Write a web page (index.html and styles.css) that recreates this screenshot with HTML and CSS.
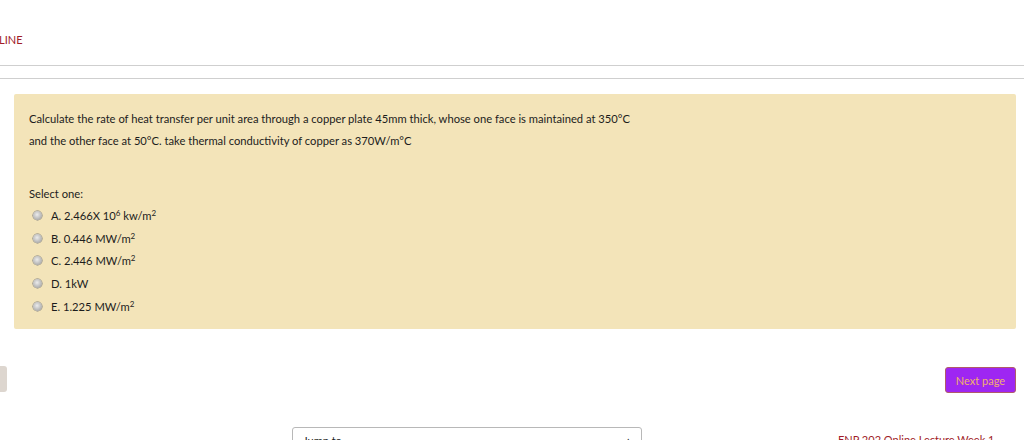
FILE: index.html
```html
<!DOCTYPE html>
<html>
<head>
<meta charset="utf-8">
<link rel="stylesheet" href="styles.css">
</head>
<body>
<div class="top">
  <div class="brand">LINE</div>
</div>
<div class="rule rule1"></div>
<div class="rule rule2"></div>
<div class="quiz">
  <div class="question">
    <p>Calculate the rate of heat transfer per unit area through a copper plate 45mm thick, whose one face is maintained at 350°C</p>
    <p>and the other face at 50°C. take thermal conductivity of copper as 370W/m°C</p>
  </div>
  <div class="answers">
    <div class="prompt">Select one:</div>
    <label class="opt"><span class="radio"></span><span class="otext">A. 2.466X 10<sup>6</sup> kw/m<sup>2</sup></span></label>
    <label class="opt"><span class="radio"></span><span class="otext">B. 0.446 MW/m<sup>2</sup></span></label>
    <label class="opt"><span class="radio"></span><span class="otext">C. 2.446 MW/m<sup>2</sup></span></label>
    <label class="opt"><span class="radio"></span><span class="otext">D. 1kW</span></label>
    <label class="opt"><span class="radio"></span><span class="otext">E. 1.225 MW/m<sup>2</sup></span></label>
  </div>
</div>
<div class="nav">
  <div class="prev"></div>
  <button class="next">Next page</button>
</div>
<div class="bottom">
  <div class="jump"><span class="jtext">Jump to...</span><span class="caret">▴</span></div>
  <div class="nextlink">ENP 202 Online Lecture Week 1</div>
</div>
</body>
</html>
```
FILE: styles.css
```css
html, body {
  margin: 0;
  padding: 0;
  background: #ffffff;
  overflow: hidden;
  height: 440px;
  font-family: "Lato", "Liberation Sans", sans-serif;
}
.top {
  height: 65px;
  position: relative;
}
.brand {
  position: absolute;
  left: -1px;
  top: 33px;
  color: #a01c28;
  font-size: 11px;
}
.rule {
  height: 1px;
  background: #cfcfcf;
}
.rule1 { margin-bottom: 12px; }
.rule2 { margin-bottom: 15px; }
.quiz {
  margin: 0 8px 0 14px;
  background: #f3e4b9;
  border-radius: 2px;
  padding: 14px 15px 16px 15px;
  height: 235px;
  box-sizing: border-box;
  color: #1c1c1c;
  font-size: 11.2px;
}
.question p {
  margin: 0;
  line-height: 22px;
}
.answers {
  margin-top: 32px;
}
.prompt {
  line-height: 20px;
}
.opt {
  display: flex;
  align-items: center;
  height: 22.7px;
  padding-left: 4px;
}
.otext sup {
  font-size: 8px;
  line-height: 0;
  vertical-align: 4px;
}
.radio {
  width: 9px;
  height: 9px;
  border-radius: 50%;
  margin-right: 9px;
  background: radial-gradient(circle at 45% 40%, #ececec 0%, #b8b8b8 60%, #8a8a8a 100%);
  box-shadow: 0 0 0 0.5px #7a7a7a;
}
.nav {
  display: flex;
  justify-content: space-between;
  align-items: flex-start;
  margin-top: 37px;
  padding-right: 8px;
}
.prev {
  width: 7px;
  height: 26px;
  background: #ddd6cf;
  border-radius: 0 3px 3px 0;
}
.next {
  width: 71px;
  height: 26px;
  background: #9e26f2;
  color: #f1b16b;
  border: 1px solid #b05a6a;
  border-radius: 3px;
  font-family: "Lato", "Liberation Sans", sans-serif;
  font-size: 11px;
  padding: 0;
  margin-top: 1px;
}
.bottom {
  position: relative;
  height: 60px;
}
.jump {
  position: absolute;
  left: 292px;
  top: 34px;
  width: 348px;
  height: 30px;
  border: 1px solid #b8b8b8;
  border-radius: 3px;
  font-size: 11px;
  color: #222;
}
.jtext { position: absolute; left: 10px; top: 6px; }
.caret { position: absolute; right: 10px; top: 6px; font-size: 9px; }
.nextlink {
  position: absolute;
  left: 838px;
  top: 40px;
  color: #a01c28;
  font-size: 11px;
}
```
